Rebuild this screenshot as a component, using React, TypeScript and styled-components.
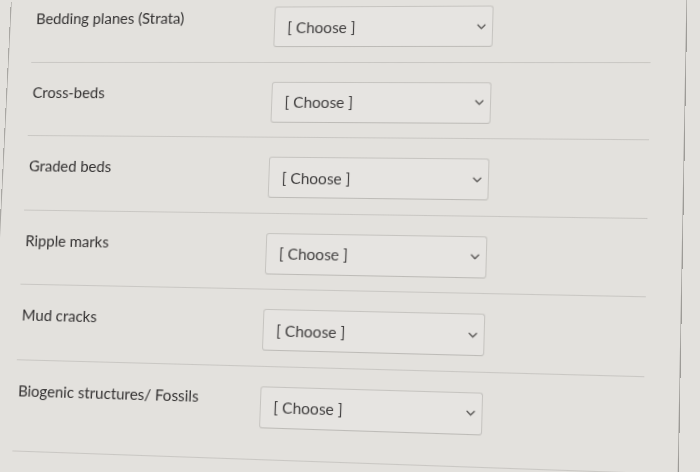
import styled, { createGlobalStyle } from "styled-components"

const GlobalStyle = createGlobalStyle`
    html, body {
        margin: 0;
        padding: 0;
        background: #e3e1dd;
        overflow: hidden;
    }
    body {
        font-family: Lato, "Open Sans", sans-serif;
    }
`

const structures = [
    'Bedding planes (Strata)',
    'Cross-beds',
    'Graded beds',
    'Ripple marks',
    'Mud cracks',
    'Biogenic structures/ Fossils',
]

const Chevron = () => (
    <svg width="9" height="6" viewBox="0 0 9 6" fill="none">
        <path d="M1 1.2l3.5 3.5L8 1.2" stroke="#5b5957" strokeWidth={1.3} strokeLinecap="round" strokeLinejoin="round" />
    </svg>
)

const App = () => {
    return (
        <>
            <GlobalStyle />
            <Page>
                <Panel>
                    {structures.map((name) => (
                        <Row key={name}>
                            <Label>{name}</Label>
                            <Select>
                                <span>[ Choose ]</span>
                                <Chevron />
                            </Select>
                        </Row>
                    ))}
                </Panel>
            </Page>
        </>
    )
}

const Page = styled.div`
    width: 700px;
    height: 472px;
    overflow: hidden;
    background: #e3e1dd;
`

// the sheet leans back a little, the right edge and bottom come forward
const Panel = styled.div`
    box-sizing: border-box;
    width: 682px;
    min-height: 560px;
    margin-left: -4px;
    padding: 0 33px 0 24px;
    border-left: 1px solid #a9a7a3;
    border-right: 1px solid #9d9b97;
    transform-origin: 354px 60px;
    transform: perspective(1000px) rotateY(-5deg) rotateX(2.8deg) skewX(-1.7deg);
`

const Row = styled.div`
    display: grid;
    grid-template-columns: 247.6px 219px;
    align-items: start;
    padding: 19px 0 14.6px 3px;
    border-bottom: 1px solid #c9c7c3;
    &:first-child {
        padding-top: 6px;
    }
    &:last-child {
        padding-bottom: 30px;
    }
`

const Label = styled.div`
    font-size: 15.5px;
    line-height: 22px;
    color: #333131;
`

const Select = styled.div`
    box-sizing: border-box;
    height: 41px;
    display: flex;
    align-items: center;
    justify-content: space-between;
    padding: 0 6px 0 13px;
    background: #e6e4e1;
    border: 1px solid #c6c4c0;
    border-bottom-color: #bdbbb7;
    border-radius: 3px;
    span {
        font-size: 15.5px;
        color: #424040;
    }
`

export default App
